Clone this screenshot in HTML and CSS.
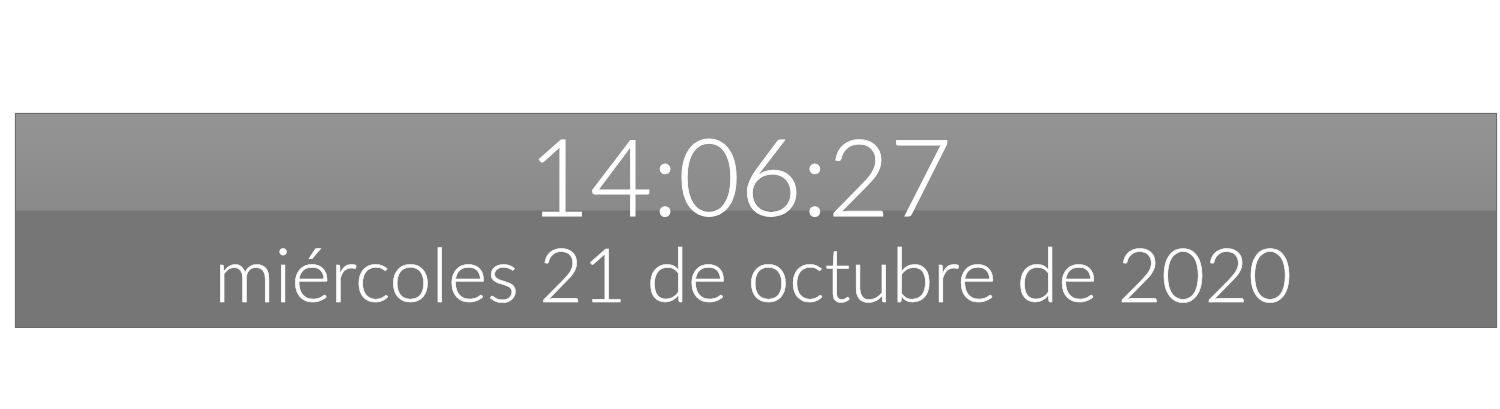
FILE: index.html
```html
<!DOCTYPE html>
<html lang="es">
<head>
<meta charset="utf-8">
<link rel="stylesheet" href="styles.css">
</head>
<body>
<div class="page">
  <div class="clock">
    <div class="time">14:06:27</div>
    <div class="date">miércoles 21 de octubre de 2020</div>
  </div>
</div>
</body>
</html>
```
FILE: styles.css
```css
html, body {
  margin: 0;
  padding: 0;
  background: #ffffff;
}
.page {
  padding: 113px 3px 0 15px;
}
.clock {
  box-sizing: border-box;
  height: 215px;
  border: 1px solid #6c6c6c;
  box-shadow: 0 0 1px rgba(0,0,0,0.35);
  background: linear-gradient(to bottom, #949494 0%, #8a8a8a 45%, #868686 45.2%, #767676 45.6%, #767676 100%);
  color: #ffffff;
  font-family: Lato, "Open Sans", sans-serif;
  font-weight: 300;
  text-align: center;
  padding-top: 7px;
}
.time {
  font-size: 107px;
  line-height: 107px;
  padding-right: 32px;
  -webkit-text-stroke: 0.8px #ffffff;
}
.date {
  font-size: 75px;
  line-height: 75px;
  margin-top: 8px;
  padding-right: 6px;
  -webkit-text-stroke: 0.6px #ffffff;
}
```
